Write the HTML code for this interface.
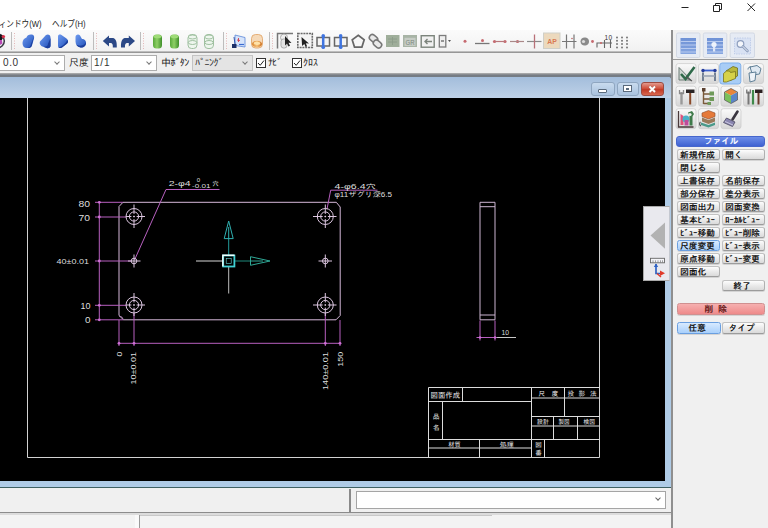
<!DOCTYPE html><html lang="ja"><head><meta charset="utf-8"><title>CAD</title><style>
*{box-sizing:border-box;margin:0;padding:0}
html,body{width:768px;height:528px;overflow:hidden;background:#fff}
body{position:relative;font-family:"Liberation Sans","IPAGothic","Noto Sans CJK JP",sans-serif;font-size:9px;color:#111}
.a{position:absolute}
.g{font-family:"Liberation Sans","IPAGothic","Noto Sans CJK JP",sans-serif}
.menu{top:18px;height:12px;line-height:12px;font-size:9px;color:#222;white-space:nowrap;font-family:"Liberation Sans","Noto Sans CJK JP",sans-serif}
.tb1{left:0;top:30px;width:672px;height:22px;background:linear-gradient(#fbfbfb,#f1f1f1)}
.tb2{left:0;top:53px;width:672px;height:21px;background:#f0f0f0}
.combo{background:#fff;border:1px solid #adadad;height:16px;top:55px;font-size:10px;line-height:13px;color:#333;padding-left:2px;white-space:nowrap}
.lbl{top:55px;height:16px;line-height:15px;font-size:10px;white-space:nowrap;color:#222}
.chev{position:absolute;right:5px;top:4px;width:4px;height:4px;border-right:1px solid #777;border-bottom:1px solid #777;transform:rotate(45deg) scale(1.0)}
.cb{top:58px;width:10px;height:10px;border:1px solid #333;background:#fff}
.rb{height:11px;border-radius:2.5px;border:1px solid #c2c2c2;border-bottom-color:#9c9c9c;border-right-color:#b0b0b0;background:linear-gradient(#fdfdfd,#ececec 45%,#dadada);font-size:8.7px;line-height:10px;text-align:left;padding-left:2px;white-space:nowrap;overflow:hidden;color:#111;box-shadow:0 1px 0 #d4d4d4;text-shadow:.3px 0 0 #333}
.rb.sel{background:linear-gradient(#d8eaff,#a9d0fb);border-color:#6a9fe0}
.ic{width:22px;height:22px;border-radius:3px;border:1px solid #c9c9c9;background:linear-gradient(#fafafa,#d9d9d9)}
</style></head><body>
<svg class="a" style="left:672px;top:0;width:96px;height:16px" viewBox="0 0 96 16">
<path d="M9.5 7.5h7" stroke="#222" stroke-width="1" fill="none"/>
<path d="M41.5 5.5h6v6h-6z M43.5 5.5v-2h6v6h-2" stroke="#222" stroke-width="1" fill="none"/>
<path d="M75.5 3.5l7.5 7.5M83 3.5l-7.5 7.5" stroke="#222" stroke-width="1" fill="none"/>
</svg>
<div class="a menu" style="left:-9px;transform:scaleX(.85);transform-origin:0 0">ウィンドウ(W)</div>
<div class="a menu" style="left:52px;transform:scaleX(.85);transform-origin:0 0">ヘルプ(H)</div>
<div class="a tb1"></div>
<div class="a" style="left:0;top:51px;width:672px;height:3px;background:linear-gradient(#dadada,#959595 40%,#999 62%,#e2e2e2)"></div>
<div class="a tb2"></div>
<div class="a" style="left:0;top:73px;width:672px;height:4px;background:linear-gradient(#b4b4b4,#85898e 40%,#737a82)"></div>
<svg class="a" style="left:0;top:30px" width="672" height="22" viewBox="0 30 672 22" fill="none">
<defs>
<linearGradient id="bl" x1="0" y1="0" x2="1" y2="1"><stop offset="0" stop-color="#6f9bf0"/><stop offset="1" stop-color="#1f4fb8"/></linearGradient>
<linearGradient id="gr" x1="0" y1="0" x2="1" y2="0"><stop offset="0" stop-color="#58a83a"/><stop offset=".45" stop-color="#8fd066"/><stop offset="1" stop-color="#3f8f2a"/></linearGradient>
<linearGradient id="og" x1="0" y1="0" x2="1" y2="0"><stop offset="0" stop-color="#d9822a"/><stop offset=".5" stop-color="#f6c27a"/><stop offset="1" stop-color="#c96a18"/></linearGradient>
</defs>
<!-- partial icon at left -->
<circle cx="-2.500" cy="41" r="6.800" fill="#efeff2" stroke="#3a3a44" stroke-width="1.500"/><path d="M0 34.600c1.500 0 3 .8 3.500 2.500L1.500 40.500H0z" fill="#15151c"/><circle cx="3.400" cy="36.600" r="1.700" fill="#d8304a"/><path d="M0 40h1.800l.7 3.500L0 45z" fill="#b848b4"/>
<!-- separators/grips -->
<g stroke="#bdbdbd"><path d="M11.500 32V50M93.500 32V50M140.500 32V50M223.500 32V50M269.500 32V50"/></g>
<g stroke="#e4b8b8" stroke-dasharray="1 1.500"><path d="M14.500 33V50M96.500 33V50M143.500 33V50M226.500 33V50M272.500 33V50"/></g>
<!-- blue solid shapes -->
<path d="M22.500 43c0-3 2-5 4-5.500c.5-2.500 3-3.500 5.500-3c2 .5 2.500 2 2 4l-2 7c-.5 2-2.500 2.500-5 2.500c-3 0-4.500-2-4.500-5z" fill="url(#bl)"/><path d="M34 36.500l-2.300 9c-.5 2-2 2.600-4.200 2.500c2-.5 3-1.500 3.300-3.500z" fill="#1c3f9c"/>
<path d="M40 41.500l6-6.500c2-1.500 4.500 0 4.500 2.500v8c0 2.500-2 3-4 2.500l-4-1.500c-2-.8-3.500-3-2.500-5z" fill="url(#bl)"/><path d="M50.500 38v7.500c0 2.500-2 3-4 2.500l-3-1.200c3 .2 4.500-.8 4.500-3z" fill="#1c3f9c"/>
<path d="M58 36.500c0-2 2-2.500 3.500-1.500l5 3.500c2 1.500 2 4 0 5.500l-4.500 3.500c-2 1-4 .5-4-1.500z" fill="url(#bl)"/><path d="M67.500 40c1 1.500.5 3-1 4l-4.500 3.500c-1.500.8-3 .6-3.700-.3c3 0 6.500-2.500 9.200-7.200z" fill="#1c3f9c"/>
<path d="M75.500 37c0-2.500 3-3.500 4.500-1.500l2 3.500c2.500 0 4.500 2 4 4.500c-.5 3-3 4.500-5.500 4c-3-.5-5-3-5-6z" fill="url(#bl)"/><path d="M86 42.500c.2 3.200-2.500 5.500-5.500 5c-2-.3-3.500-1.500-4.300-3c3 2 7 1.500 9.800-2z" fill="#1c3f9c"/>
<!-- undo / redo -->
<path d="M102.800 41l6.200-5.500v2.500h3c3.500 0 5 2.500 4.800 9.500h-4c.2-3-.3-4.500-2.300-4.500H109v3.500z" fill="#2b4886"/>
<path d="M135 41l-6.200-5.500v2.500h-3c-3.500 0-5 2.500-4.800 9.500h4c-.2-3 .3-4.500 2.300-4.500h1.500v3.500z" fill="#2b4886"/>
<!-- green cylinders -->
<rect x="153" y="34.500" width="9" height="14" rx="3.500" fill="url(#gr)"/><ellipse cx="157.500" cy="36.500" rx="4" ry="1.800" fill="#9fdc78"/>
<rect x="170" y="34.500" width="9" height="14" rx="3.500" fill="url(#gr)"/><ellipse cx="174.500" cy="36.500" rx="4" ry="1.800" fill="#9fdc78"/>
<g stroke="#9fc0a0" fill="#eef6ee"><rect x="188" y="34.500" width="9" height="14" rx="3.500"/><ellipse cx="192.500" cy="37" rx="4.200" ry="2"/><ellipse cx="192.500" cy="42.500" rx="4.200" ry="2" fill="none"/>
<rect x="204.500" y="34.500" width="9" height="14" rx="3.500"/><ellipse cx="209" cy="37" rx="4.200" ry="2"/><ellipse cx="209" cy="42.500" rx="4.200" ry="2" fill="none"/></g>
<!-- view icon -->
<path d="M235 35l10 2.500v9.500l-10-1.500z" fill="#d6e4fa" stroke="#5a86d8" stroke-width=".8"/><path d="M232 44h4.500v4H232z" fill="#1d2f66"/><path d="M237 40l3 .5M238.500 38v4" stroke="#d23a4a" stroke-width=".9"/><path d="M239 44.500h5" stroke="#3a6ad0" stroke-width="1.200"/><path d="M234 37l1 7" stroke="#3358b0" stroke-width="1"/>
<!-- orange cylinder -->
<rect x="251.500" y="34.500" width="11" height="13.500" rx="4" fill="#f5d9b8" stroke="#e0a060" stroke-width=".8"/><ellipse cx="257" cy="44" rx="5" ry="3.200" fill="url(#og)"/><ellipse cx="257" cy="43.300" rx="3.300" ry="1.600" fill="#ffe2a8"/>
<!-- select icons -->
<path d="M277.500 48.500V33.500H293" stroke="#777" stroke-width="1.500"/><circle cx="284" cy="37.500" r="3.500" fill="#eee" stroke="#aaa"/><rect x="281" y="39" width="6" height="9" rx="2.500" fill="#e2e2e2" stroke="#aaa"/><path d="M285 36l6.500 7-3-.3 1.500 3-1.500.8-1.500-3-2 2z" fill="#222"/>
<rect x="297.800" y="33.500" width="14.500" height="14" stroke="#6a6a6a" stroke-width="1.600" stroke-dasharray="2 .8" fill="#f4f4f4"/><path d="M301.500 37l7.500 6.500-3.200-.2 1.300 3-1.500.7-1.300-3-2.200 2z" fill="#222"/>
<rect x="317" y="37.500" width="12.500" height="8.500" stroke="#666" stroke-width="1.500" fill="#f4f4f4"/><path d="M323.200 34.500v14" stroke="#3f74e0" stroke-width="2.500"/><circle cx="323.200" cy="36" r="1.800" fill="#3f74e0"/><circle cx="323.200" cy="47.200" r="1.800" fill="#3f74e0"/>
<rect x="334.500" y="37.500" width="12.500" height="8.500" stroke="#666" stroke-width="1.500" fill="#f4f4f4"/><path d="M340.700 34.500v14" stroke="#3f74e0" stroke-width="2.500"/><circle cx="340.700" cy="36" r="1.800" fill="#3f74e0"/><circle cx="340.700" cy="47.200" r="1.800" fill="#3f74e0"/>
<path d="M358.200 35.300l6 4.500-2.300 7.300h-7.400l-2.300-7.300z" stroke="#666" stroke-width="1.700" fill="#f6f6f6"/>
<g stroke="#777" stroke-width="1.500" fill="#e9e9e9"><rect x="369" y="35.500" width="9" height="6" rx="3" transform="rotate(38 373.500 38.500)"/><rect x="373" y="41" width="9" height="6" rx="3" transform="rotate(38 377.500 44)"/></g>
<rect x="386" y="35" width="13.500" height="12" fill="#9fae9a"/><path d="M388 39h9M388 42h9M392.500 37v8" stroke="#8a9a88" stroke-width=".8"/>
<rect x="403" y="35" width="14" height="12" fill="#a8b4a6"/><rect x="404.500" y="37.800" width="11" height="8.200" fill="#c6ccc5"/><text x="405.500" y="45" font-family="'Liberation Sans',sans-serif" font-size="7.500" fill="#7d877d" textLength="9" lengthAdjust="spacingAndGlyphs">GR</text>
<rect x="421.200" y="35.700" width="13" height="11.500" stroke="#7c847c" stroke-width="1.400" fill="#f1f1f1"/><path d="M425 41.500h7M427.500 39l-2.500 2.500 2.500 2.500" stroke="#7c847c" stroke-width="1.400"/>
<rect x="439.300" y="35.500" width="6.500" height="11.500" stroke="#7c7c7c" stroke-width="1.300" fill="#efefef"/><path d="M441 41h3" stroke="#777" stroke-width="1.500"/><path d="M448 40h3l-1.500 2z" fill="#555"/>
<!-- snap icons -->
<g fill="#c66a70"><circle cx="465" cy="41.200" r="1.500"/><circle cx="482.500" cy="40.500" r="1.500"/><circle cx="494.500" cy="41.500" r="1.600"/><circle cx="505" cy="41.500" r="1.600"/><circle cx="517.500" cy="41.500" r="1.600"/><circle cx="592.500" cy="41.500" r="1.400"/></g>
<path d="M475 43.500h14.500" stroke="#777" stroke-width="1.300"/>
<path d="M495 41.500h10" stroke="#b8787c" stroke-width="1.200"/>
<path d="M510 41.500h14" stroke="#a88" stroke-width="1.200"/>
<path d="M527 41.500h14.500" stroke="#8a8a8a" stroke-width="1.200"/><path d="M534.500 34.500v14" stroke="#b87078" stroke-width="1.300"/>
<rect x="543.500" y="33" width="16.500" height="15.500" fill="#ecd9bd" stroke="#cfcfc8" stroke-width="1"/>
<path d="M562 41.500h14.500M566.500 34.500v14M574 34.500v14" stroke="#777" stroke-width="1.200"/><circle cx="572" cy="38.500" r=".8" fill="#b66"/>
<path d="M580.500 41.500c0-3 2.500-4.500 5-4c2.500.5 3.500 2 3.500 4s-1 3.500-3.500 4c-2.500.5-5-1-5-4z" fill="#8a8a8a"/><circle cx="583.500" cy="41.500" r="1.600" fill="#ddd"/>
<path d="M597 47.500v-4.500h15M604.500 40v8M610.500 40v8" stroke="#666" stroke-width="1.100"/><circle cx="601" cy="43" r="1" fill="#c66"/>
<g fill="#777"><circle cx="617" cy="37.500" r="1"/><circle cx="622" cy="37.500" r="1"/><circle cx="627" cy="37.500" r="1"/><circle cx="617" cy="40.800" r="1"/><circle cx="622" cy="40.800" r="1"/><circle cx="627" cy="40.800" r="1"/><circle cx="617" cy="44.100" r="1"/><circle cx="622" cy="44.100" r="1"/><circle cx="627" cy="44.100" r="1"/><circle cx="617" cy="47.400" r="1"/><circle cx="622" cy="47.400" r="1"/><circle cx="627" cy="47.400" r="1"/></g>
<text x="547.300" y="44" font-family="'Liberation Sans',sans-serif" font-weight="bold" font-size="7.800" fill="#d97a52" textLength="9.500" lengthAdjust="spacingAndGlyphs">AP</text>
<text x="604.500" y="39.500" font-family="'Liberation Sans',sans-serif" font-size="6.500" fill="#333" textLength="7.500">10</text>
</svg>

<div class="a combo g" style="left:-2px;width:67px;letter-spacing:.6px;padding-left:4px">0.0<i class="chev"></i></div>
<div class="a lbl g" style="left:69px">尺度</div>
<div class="a combo g" style="left:91px;width:66px;letter-spacing:.8px">1/1<i class="chev"></i></div>
<div class="a lbl g" style="left:161px;letter-spacing:-.6px">中ﾎﾞﾀﾝ</div>
<div class="a combo g" style="left:192px;width:61px;background:#e4e4e4;border-color:#c4c4c4;letter-spacing:-.5px">ﾊﾟﾆﾝｸﾞ<i class="chev"></i></div>
<div class="a cb" style="left:256px"></div><svg class="a" style="left:256px;top:58px" width="10" height="10"><path d="M2 5l2.2 2.3L8 2.5" stroke="#222" fill="none" stroke-width="1"/></svg>
<div class="a lbl g" style="left:268px;letter-spacing:-1px">ﾅﾋﾞ</div>
<div class="a cb" style="left:292px"></div><svg class="a" style="left:292px;top:58px" width="10" height="10"><path d="M2 5l2.2 2.3L8 2.5" stroke="#222" fill="none" stroke-width="1"/></svg>
<div class="a lbl g" style="left:303px;letter-spacing:0">ｸﾛｽ</div>
<div class="a" style="left:0;top:75px;width:672px;height:8px;background:#757c84"></div>
<div class="a" style="left:0;top:77px;width:671px;height:411px;background:#afcbe6;border-top-right-radius:3px"></div>
<div class="a" style="left:0;top:77px;width:671px;height:21px;background:linear-gradient(#a3bddb,#bfd2e8);border-top-right-radius:3px"></div>
<div class="a" style="left:0;top:487px;width:672px;height:1px;background:#3f6163"></div>
<div class="a" style="left:591px;top:82px;width:24px;height:14px;border:1px solid #8fa6c0;border-radius:3px;background:linear-gradient(#c9dbee,#a9c2de)"></div>
<div class="a" style="left:598px;top:89px;width:9px;height:4px;border:1px solid #5a6a7c;background:#fff;border-radius:1px"></div>
<div class="a" style="left:617px;top:82px;width:22px;height:14px;border:1px solid #8fa6c0;border-radius:3px;background:linear-gradient(#c9dbee,#a9c2de)"></div>
<div class="a" style="left:623px;top:85px;width:9px;height:7px;border:1px solid #5a6a7c;background:#fff"></div>
<div class="a" style="left:626px;top:88px;width:3px;height:2px;background:#5a6a7c"></div>
<div class="a" style="left:641px;top:82px;width:23px;height:14px;border:1px solid #9c4a40;border-radius:3px;background:linear-gradient(#e39a8e,#d0503c 45%,#c03a26 55%,#d8674f)"></div>
<svg class="a" style="left:641px;top:82px" width="23" height="14"><path d="M8.500 4.500l5.500 5.500M14 4.500l-5.500 5.500" stroke="#b0665c" stroke-width="3" fill="none"/><path d="M8.500 4.500l5.500 5.500M14 4.500l-5.500 5.500" stroke="#fff" stroke-width="1.800" fill="none"/></svg>
<div class="a" style="left:0;top:98px;width:665px;height:383px;background:#000"></div>
<svg class="a" style="left:0;top:98px" width="665" height="383" viewBox="0 98 665 383" font-family="'Liberation Sans','IPAGothic',sans-serif" fill="none">
<!-- sheet frame -->
<path d="M27.500 98V457.500H599.500V98" stroke="#d2d2d2" stroke-width="1"/>
<!-- plate outline -->
<path d="M123 202.300H336.300L340.200 207V315.500L336 319.800H123.500L119 315.500V206.500Z" stroke="#d6b8da" stroke-width="1"/>
<path d="M119 316q3.500 0 4.500 3.800" stroke="#b98cc0" stroke-width=".8"/>
<!-- dimension lines (magenta) -->
<g stroke="#b860c0" stroke-width="1">
<path d="M95 202.300H123M95 217H126M95 261H131M95 305.300H126M95 319.800H123"/>
<path d="M99.300 202V320"/>
<path d="M119 320V346M134 313V346M325.300 313V346M340 320V346"/>
<path d="M118 343.300H340"/>
<path d="M134.500 260L166 189.500H219.500"/>
<path d="M327 209L330.700 190.200H377.500"/>
<path d="M480 320.500V340.500M495 320.500V340.500M476.500 337.500H497"/>
</g>
<path d="M497 337.500H516" stroke="#c8c8c8"/>
<g fill="#cf6fd6"><circle cx="99.300" cy="202.300" r="1.400"/><circle cx="99.300" cy="217" r="1.400"/><circle cx="99.300" cy="261" r="1.400"/><circle cx="99.300" cy="305.300" r="1.400"/><circle cx="99.300" cy="319.800" r="1.400"/>
<circle cx="119" cy="343.300" r="1.400"/><circle cx="134" cy="343.300" r="1.400"/><circle cx="325.300" cy="343.300" r="1.400"/><circle cx="340" cy="343.300" r="1.400"/><circle cx="480" cy="337.500" r="1.200"/><circle cx="495" cy="337.500" r="1.200"/></g>
<!-- holes -->
<g stroke="#dcc6e0" stroke-width="1">
<circle cx="134" cy="216.500" r="8"/><circle cx="134" cy="216.500" r="4.600"/><path d="M126 216.5H131.4M133.2 216.5H134.8M136.6 216.5H145M134 204.5V213.9M134 215.7V217.3M134 219.1V228"/>
<circle cx="325.300" cy="216.500" r="8"/><circle cx="325.300" cy="216.500" r="4.600"/><path d="M313 216.5H322.7M324.5 216.5H326.1M327.90000000000003 216.5H336.5M325.3 204.5V213.9M325.3 215.7V217.3M325.3 219.1V228"/>
<circle cx="134" cy="305" r="8"/><circle cx="134" cy="305" r="4.600"/><path d="M126 305H131.4M133.2 305H134.8M136.6 305H145M134 293V302.4M134 304.2V305.8M134 307.6V316"/>
<circle cx="325.300" cy="305" r="8"/><circle cx="325.300" cy="305" r="4.600"/><path d="M313 305H322.7M324.5 305H326.1M327.90000000000003 305H336.5M325.3 293V302.4M325.3 304.2V305.8M325.3 307.6V316"/>
<circle cx="134" cy="261" r="2.800"/><path d="M128 261H140.500M134 254.500V267.500"/>
<circle cx="325.300" cy="261" r="2.800"/><path d="M318.500 261H332M325.300 254.500V267.500"/>
</g>
<!-- origin marker -->
<path d="M196 261H222" stroke="#d8d8d8"/>
<path d="M228.700 267V293.500" stroke="#bdbdbd"/>
<path d="M228.700 255V238" stroke="#239c9c"/>
<path d="M228.700 221L224.200 238.600H233.200Z M228.700 227V238.600" stroke="#2fb0b0" stroke-width="1"/>
<path d="M235 261H251" stroke="#1f8a7c"/>
<path d="M270 261L250.500 256.700V265.300Z M250.500 261H263" stroke="#2fa896" stroke-width="1"/>
<rect x="223.200" y="255.500" width="11.200" height="11" stroke="#3fd0d4" stroke-width="1.800"/>
<path d="M222.800 266.500V255.200H234.500" stroke="#f2ffff" stroke-width="1.400"/>
<rect x="226.200" y="258.500" width="5" height="5" stroke="#6adada" stroke-width=".6"/>
<!-- side view -->
<path d="M480 202.300H495V319.800H480Z M480 206.700H495M480 315H495" stroke="#cdb6d2" stroke-width="1"/>
<!-- text -->
<g fill="#dedede" font-size="9" stroke="none">
<text x="78.500" y="206.600" textLength="11.500" lengthAdjust="spacingAndGlyphs">80</text>
<text x="78.500" y="221" textLength="11.500" lengthAdjust="spacingAndGlyphs">70</text>
<text x="56.500" y="264" font-size="7" textLength="32.500" lengthAdjust="spacingAndGlyphs">40±0.01</text>
<text x="80.500" y="308.500" textLength="10" lengthAdjust="spacingAndGlyphs">10</text>
<text x="85" y="323.300" textLength="5.500" lengthAdjust="spacingAndGlyphs">0</text>
<text x="168.700" y="185.800" font-size="7.600" textLength="22" lengthAdjust="spacingAndGlyphs">2-φ4</text>
<text x="196.800" y="181.800" font-size="6" textLength="3.400" lengthAdjust="spacingAndGlyphs">0</text>
<text x="192" y="188.200" font-size="5.500" textLength="18.500" lengthAdjust="spacingAndGlyphs">-0.01</text>
<text x="212.300" y="186" font-size="6.500" font-family="'Liberation Sans','IPAGothic',sans-serif">穴</text>
<text x="334.600" y="188.500" font-size="7" textLength="41.500" lengthAdjust="spacingAndGlyphs">4-φ6.4穴</text>
<text x="334.600" y="197.300" font-size="7" textLength="57.500" lengthAdjust="spacingAndGlyphs">φ11ザグリ深6.5</text>
<text x="501.500" y="335" font-size="7.500" textLength="7.500" lengthAdjust="spacingAndGlyphs">10</text>
<text transform="translate(121.600 356.500)rotate(-90)" font-size="8" textLength="4.800" lengthAdjust="spacingAndGlyphs">0</text>
<text transform="translate(136.400 384.500)rotate(-90)" font-size="8" textLength="32.500" lengthAdjust="spacingAndGlyphs">10±0.01</text>
<text transform="translate(327.800 390)rotate(-90)" font-size="8" textLength="38" lengthAdjust="spacingAndGlyphs">140±0.01</text>
<text transform="translate(342.600 366.800)rotate(-90)" font-size="8" textLength="15" lengthAdjust="spacingAndGlyphs">150</text>
</g>
<!-- title block -->
<g stroke="#dcdcdc" stroke-width="1">
<path d="M428.500 457.500V387.500H599.500"/>
<path d="M428.500 401.500H531.500M462.500 387.500V401.500M531.500 387.500V457.500M442.500 401.500V439.500M428.500 439.500H599.500M428.500 448H531.500M479.500 439.500V457.500"/>
<path d="M531.500 398H599.500M564.500 387.500V416.500M531.500 416.500H599.500M531.500 426H599.500M553.500 416.500V439.500M577.500 416.500V439.500M544.500 439.500V457.500"/>
</g>
<g fill="#ececec" stroke="none" font-family="'Liberation Sans','IPAGothic','Noto Sans CJK JP',sans-serif" font-size="7.500">
<text x="430.500" y="398.300" font-size="7.800" textLength="29.500" lengthAdjust="spacingAndGlyphs">図面作成</text>
<text x="432.700" y="418.500" font-size="6.800">品</text>
<text x="432.700" y="430.300" font-size="6.800">名</text>
<text x="448.200" y="446.800" font-size="6.800" textLength="12.500" lengthAdjust="spacingAndGlyphs">材質</text>
<text x="499.700" y="446.800" font-size="6.800" textLength="14" lengthAdjust="spacingAndGlyphs">処理</text>
<text x="538.500" y="396.200" font-size="6.600">尺</text><text x="551.700" y="396.200" font-size="6.600">度</text>
<text x="567.500" y="396.200" font-size="6.600">投</text><text x="578.500" y="396.200" font-size="6.600">影</text><text x="590" y="396.200" font-size="6.600">法</text>
<text x="537" y="424" font-size="6.300" textLength="12" lengthAdjust="spacingAndGlyphs">設計</text>
<text x="558.500" y="424" font-size="6.300" textLength="11" lengthAdjust="spacingAndGlyphs">製図</text>
<text x="583.500" y="424" font-size="6.300" textLength="11.500" lengthAdjust="spacingAndGlyphs">検図</text>
<text x="535.300" y="447" font-size="6.500">図</text>
<text x="535.300" y="454.800" font-size="6.500">番</text>
</g>
</svg>

<div class="a" style="left:643px;top:206px;width:27px;height:75px;background:#e9e9ee;border:1px solid #a9a9a9;border-right-color:#c4c8d0"></div>
<svg class="a" style="left:643px;top:206px" width="27" height="75" viewBox="643 206 27 75"><path d="M665 222.400v26.300L650.500 235.500z" fill="#b2b2b2"/>
<rect x="650.500" y="258.300" width="14" height="4.500" fill="#f4f4f8" stroke="#666" stroke-width=".9"/><path d="M653 262.500v-2.200M655.500 262.500v-2.200M658 262.500v-2.200M660.500 262.500v-2.200M662.500 262.500v-2.200" stroke="#666" stroke-width=".6"/>
<path d="M656 264v9.500h4" stroke="#2f62c4" stroke-width="1.700" fill="none"/><path d="M653.800 267l2.200-3.600 2.200 3.600z" fill="#2f62c4"/><path d="M660 270.500l5 2.700-5 2.700z" fill="#e03a2a"/><path d="M657 273.500l4 3.500" stroke="#e03a2a" stroke-width="1.400"/></svg>
<div class="a" style="left:0;top:488px;width:672px;height:40px;background:#f0f0f0"></div>
<div class="a" style="left:349px;top:489px;width:2px;height:23px;background:#8a8a8a"></div>
<div class="a" style="left:356px;top:491px;width:310px;height:18px;background:#fff;border:1px solid #a5a5a5"><i class="chev" style="right:5px;top:4px;border-color:#666"></i></div>
<div class="a" style="left:0;top:512px;width:672px;height:1px;background:#8c8c8c"></div>
<div class="a" style="left:0;top:513px;width:672px;height:2px;background:#dcdcdc"></div>
<div class="a" style="left:0;top:515px;width:672px;height:13px;background:#f3f3f3"></div>
<div class="a" style="left:135px;top:515px;width:4px;height:13px;background:#fafafa"></div>
<div class="a" style="left:139px;top:515px;width:1px;height:13px;background:#9a9a9a"></div>
<div class="a" style="left:140px;top:515px;width:352px;height:1px;background:#c9c9c9"></div>
<div class="a" style="left:672px;top:30px;width:96px;height:498px;background:#f0f0f0"></div>
<div class="a" style="left:671px;top:30px;width:2px;height:498px;background:#8f8f8f"></div>
<div class="a" style="left:673px;top:59px;width:95px;height:1px;background:#9a9a9a"></div>
<svg class="a" style="left:672px;top:30px" width="96" height="104" viewBox="672 30 96 104" fill="none">
<defs>
<linearGradient id="ib" x1="0" y1="0" x2="0" y2="1"><stop offset="0" stop-color="#fbfbfb"/><stop offset="1" stop-color="#d6d6d6"/></linearGradient>
<linearGradient id="st" x1="0" y1="0" x2="0" y2="1"><stop offset="0" stop-color="#6f92d6"/><stop offset="1" stop-color="#86a6e0"/></linearGradient>
</defs>
<!-- top three buttons -->
<g fill="#e6ebf4" stroke="#d3d9e4"><rect x="676.500" y="33" width="23.500" height="24.500" rx="1.500"/><rect x="703.300" y="33" width="23.500" height="24.500" rx="1.500"/><rect x="730.200" y="33" width="24.300" height="24.500" rx="1.500"/></g>
<rect x="680.500" y="38" width="15.500" height="16" fill="url(#st)"/><path d="M680.500 41.500h15.500M680.500 45h15.500M680.500 48.500h15.500M680.500 52h15.500" stroke="#b9cbef" stroke-width="1.200"/>
<rect x="707" y="38" width="16" height="16" fill="url(#st)"/><path d="M707 41.500h16M707 45h16M707 48.500h16M707 52h16" stroke="#b9cbef" stroke-width="1.200"/><circle cx="714" cy="44.500" r="2.600" fill="#eef3fc"/><path d="M713 46.500h2.200v5h-2.200z" fill="#dfe7f7"/>
<rect x="734.500" y="38" width="16" height="16" fill="#d9e2f3" stroke="#b9c8e6" stroke-dasharray="1.500 1" stroke-width=".8"/><circle cx="740.500" cy="44" r="3.300" fill="#f4f6fb" stroke="#8e9fbe" stroke-width="1.200"/><path d="M743 46.500l4.500 4.500" stroke="#8e9fbe" stroke-width="2.600" stroke-linecap="round"/><path d="M743 46.500l4.500 4.500" stroke="#eef1f8" stroke-width="1" stroke-linecap="round"/>
<!-- icon button backgrounds -->
<g fill="url(#ib)" stroke="#cdcdcd" stroke-width=".8">
<rect x="676" y="63.600" width="20" height="20" rx="2.500"/><rect x="698.500" y="63.600" width="20" height="20" rx="2.500"/><rect x="743.500" y="63.600" width="20" height="20" rx="2.500"/>
<rect x="676" y="86.200" width="20" height="20" rx="2.500"/><rect x="698.500" y="86.200" width="20" height="20" rx="2.500"/><rect x="721" y="86.200" width="20" height="20" rx="2.500"/><rect x="743.500" y="86.200" width="20" height="20" rx="2.500"/>
<rect x="676" y="108.700" width="20" height="20" rx="2.500"/><rect x="698.500" y="108.700" width="20" height="20" rx="2.500"/><rect x="721" y="108.700" width="20" height="20" rx="2.500"/>
</g>
<rect x="719.800" y="63" width="21" height="21" rx="2.500" fill="#a8cdf6" stroke="#7fb0ea" stroke-width="1"/>
<!-- r1c1 check + triangle -->
<path d="M679 67.500v12.500h12z" fill="#cfd6d2" stroke="#6a7a74" stroke-width="1"/><path d="M681 74l4.500 5 9-12" stroke="#2f6a4a" stroke-width="2.600"/><path d="M686 77l6 4" stroke="#555" stroke-width="1.200"/>
<!-- r1c2 dimension -->
<path d="M703 70.500h12" stroke="#3a5fd0" stroke-width="1.800"/><circle cx="703" cy="70.500" r="1.700" fill="#243a9a"/><circle cx="715" cy="70.500" r="1.700" fill="#243a9a"/><path d="M703 72.500v8.500M715 72.500v8.500" stroke="#5f6f86" stroke-width="1.700"/><path d="M703 76h12" stroke="#9aa4b4" stroke-width="1.600"/>
<!-- r1c3 folders -->
<path d="M726 71l7-4.500 4.500 1.500v8l-7 4.500z" fill="#b9b83a" stroke="#6f7020" stroke-width=".8"/><path d="M723.500 73.500l3-2.500h3l1 1.500 5-1v7l-9 3.500h-3z" fill="#d6d24a" stroke="#77741f" stroke-width=".8"/>
<!-- r1c4 printer -->
<path d="M750 67l7-1.500 4 3-1.500 5.500-7 1z" fill="#dfe9f2" stroke="#5f7f96" stroke-width="1"/><path d="M749 73l7-1-1 8.500-5 1.500z" fill="#eef3f8" stroke="#5f7f96" stroke-width="1"/><path d="M748 69.500c0-2 1.500-3 3-2.500" stroke="#5f7f96" stroke-width="1"/>
<!-- r2c1 wrench + hammer -->
<path d="M681.500 92v12.500" stroke="#9a9a9a" stroke-width="2.400"/><path d="M679.500 90v3.500h4V90" stroke="#8a8a8a" stroke-width="1.300"/><path d="M686 89.500h8.500v3.500H686z" fill="#2a2424"/><path d="M690.200 93v11.500" stroke="#8a4a2a" stroke-width="2"/>
<!-- r2c2 tree -->
<path d="M703.500 89v15M703.500 94h8M703.500 99h8M703.500 103.500h6" stroke="#7a5a3a" stroke-width="1.400"/><g fill="#6f9a5a"><rect x="709.500" y="91.500" width="4.500" height="4"/><rect x="709.500" y="97" width="4.500" height="4"/><rect x="707.500" y="102" width="3.500" height="3"/></g><rect x="702" y="88" width="3.500" height="3.500" fill="#5a4030"/>
<!-- r2c3 cube -->
<path d="M731 88.500l6.500 3.500-6.500 3.500-6.500-3.500z" fill="#e8863a"/><path d="M724.500 92l6.500 3.500v8l-6.500-3.500z" fill="#7ac05a"/><path d="M737.500 92l-6.500 3.500v8l6.500-3.500z" fill="#5a86c8"/><path d="M731 88.500l6.500 3.500v8l-6.500 3.500-6.500-3.500v-8z" stroke="#555" stroke-width=".7"/>
<!-- r2c4 tools -->
<path d="M748.500 91.500v13" stroke="#777" stroke-width="2"/><path d="M746.800 89.500v3.500h3.500v-3.500" stroke="#666" stroke-width="1.200"/><path d="M753 90v14.500" stroke="#3f8a4a" stroke-width="2.200"/><path d="M755 89.500h7.500v3.500H755z" fill="#2a2020"/><path d="M758.500 93v11.500" stroke="#6a3a2a" stroke-width="2"/>
<!-- r3c1 chart -->
<path d="M678.500 111v16h15" stroke="#4a3a3a" stroke-width="1.300"/><path d="M680.500 114l3 2v9h-3z" fill="#e0507a"/><circle cx="686" cy="119" r="3.500" fill="#4ab0c8"/><path d="M684.500 120h4v5.500h-4z" fill="#c04a9a"/><path d="M688 112.500l4-1.500 2 3-1.500 2.500v9h-3v-9z" fill="#3f7a4a"/><circle cx="690" cy="114.500" r="1.600" fill="#e9efe9"/>
<!-- r3c2 layered -->
<path d="M708.500 110.500l6.500 2.500v3.500l-6.500 2.500-6.500-2.500v-3.500z" fill="#e57a3a" stroke="#8a4a2a" stroke-width=".6"/><path d="M702 117.500l6.500 2.500 6.500-2.500v4l-6.500 2.500-6.500-2.500z" fill="#9a7a5a"/><path d="M701 122.500l7.500 2.500 6.500-2.500v2.500l-6.500 2.500-7.500-2.500z" fill="#4a9a8a"/><path d="M700.500 122c-1.500 1-1 3.500.5 4" stroke="#555" stroke-width="1.200"/>
<!-- r3c3 brush -->
<path d="M737.500 111.500l-5 8" stroke="#3a3640" stroke-width="2.600" stroke-linecap="round"/><path d="M726.500 118l8.500 4-2.500 4.500-9-4z" fill="#8a86b0" stroke="#4a4860" stroke-width=".8"/><path d="M725 121.500l8 3.500" stroke="#c9c6e0" stroke-width="1"/>
</svg>

<div class="a g" style="left:676px;top:136px;width:89px;height:11px;border-radius:3px;background:linear-gradient(#6d8ee8,#3f62d2);color:#f4f7ff;font-size:8.6px;line-height:8.5px;text-align:center;letter-spacing:0;padding-left:1px;text-shadow:.4px 0 0 #fff;border:1px solid #4666cc">ファイル</div>
<div class="a g rb" style="left:677px;top:149.0px;width:43px">新規作成</div>
<div class="a g rb" style="left:722px;top:149.0px;width:43px">開く</div>
<div class="a g rb" style="left:677px;top:162.1px;width:43px">閉じる</div>
<div class="a g rb" style="left:677px;top:175.1px;width:43px">上書保存</div>
<div class="a g rb" style="left:722px;top:175.1px;width:43px">名前保存</div>
<div class="a g rb" style="left:677px;top:188.2px;width:43px">部分保存</div>
<div class="a g rb" style="left:722px;top:188.2px;width:43px">差分表示</div>
<div class="a g rb" style="left:677px;top:201.2px;width:43px">図面出力</div>
<div class="a g rb" style="left:722px;top:201.2px;width:43px">図面変換</div>
<div class="a g rb" style="left:677px;top:214.2px;width:43px">基本ﾋﾞｭｰ</div>
<div class="a g rb" style="left:722px;top:214.2px;width:43px">ﾛｰｶﾙﾋﾞｭｰ</div>
<div class="a g rb" style="left:677px;top:227.3px;width:43px">ﾋﾞｭｰ移動</div>
<div class="a g rb" style="left:722px;top:227.3px;width:43px">ﾋﾞｭｰ削除</div>
<div class="a g rb sel" style="left:677px;top:240.4px;width:43px">尺度変更</div>
<div class="a g rb" style="left:722px;top:240.4px;width:43px">ﾋﾞｭｰ表示</div>
<div class="a g rb" style="left:677px;top:253.4px;width:43px">原点移動</div>
<div class="a g rb" style="left:722px;top:253.4px;width:43px">ﾋﾞｭｰ変更</div>
<div class="a g rb" style="left:677px;top:266.4px;width:43px">図面化</div>
<div class="a g rb" style="left:722px;top:279.5px;width:43px;text-align:center;padding:0 3px 0 0">終了</div>
<div class="a g rb" style="left:677px;top:302.5px;width:88px;height:12px;background:linear-gradient(#f6b0b0,#ee8a8a);border-color:#d09090;color:#7a1010;letter-spacing:5px;line-height:10px;text-align:center;padding:0 6px 0 0">削除</div>
<div class="a g rb sel" style="left:677px;top:321.5px;width:44px;height:12px;line-height:10px;text-align:center;padding:0 4px 0 0">任意</div>
<div class="a g rb" style="left:722px;top:321.5px;width:43px;height:12px;line-height:10px;text-align:center;padding:0 4px 0 0">タイプ</div>
</body></html>
